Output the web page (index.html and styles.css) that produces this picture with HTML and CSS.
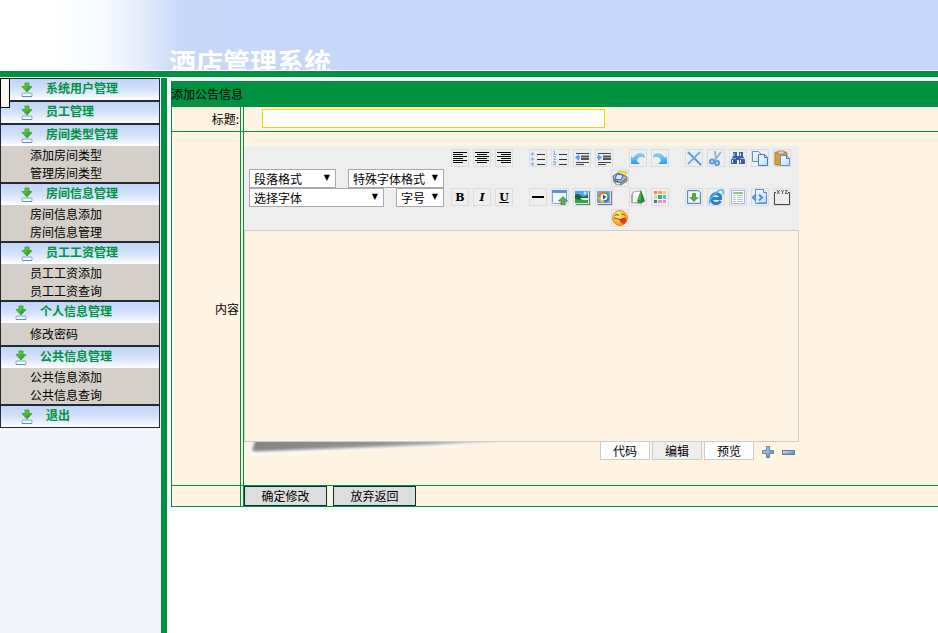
FILE: index.html
```html
<!DOCTYPE html>
<html lang="zh-CN">
<head>
<meta charset="utf-8">
<title>酒店管理系统</title>
<link rel="stylesheet" href="styles.css">
</head>
<body>
<svg class="defs" aria-hidden="true">
  <defs>
    <linearGradient id="gGreen" x1="0" y1="0" x2="1" y2="1"><stop offset="0" stop-color="#7be35c"/><stop offset="1" stop-color="#1c8414"/></linearGradient>
    <linearGradient id="gBlue" x1="0" y1="0" x2="1" y2="1"><stop offset="0" stop-color="#d4e8fc"/><stop offset="1" stop-color="#3f7fc8"/></linearGradient>
    <linearGradient id="gSheet" x1="0" y1="0" x2="1" y2="1"><stop offset="0" stop-color="#ffffff"/><stop offset="1" stop-color="#b9dafa"/></linearGradient>
    <linearGradient id="gArc" x1="0" y1="0" x2="0" y2="1"><stop offset="0" stop-color="#8fd3fa"/><stop offset="1" stop-color="#2f9df2"/></linearGradient>
    <radialGradient id="gFace" cx=".4" cy=".3" r=".8"><stop offset="0" stop-color="#fff27a"/><stop offset="1" stop-color="#f08a10"/></radialGradient>
    <symbol id="down" viewBox="0 0 12 15"><path d="M4 1h4v3.500h3L6 10 1 4.500h3z" fill="url(#gGreen)" stroke="#3fae35"/><rect x="1" y="11" width="10" height="3.500" rx="1" fill="#f4f8ff" stroke="#7fa3e2"/><path d="M1 14.500h10" stroke="#5f8ad6"/></symbol>
  </defs>
</svg>

<header class="banner"><h1>酒店管理系统</h1></header>

<div class="page">
  <nav class="side">
    <span class="handle"></span>
    <section><h2><svg><use href="#down"/></svg><a href="#">系统用户管理</a></h2></section>
    <section><h2><svg><use href="#down"/></svg><a href="#">员工管理</a></h2></section>
    <section><h2><svg><use href="#down"/></svg><a href="#">房间类型管理</a></h2>
      <ul><li><a href="#">添加房间类型</a></li><li><a href="#">管理房间类型</a></li></ul></section>
    <section><h2><svg><use href="#down"/></svg><a href="#">房间信息管理</a></h2>
      <ul><li><a href="#">房间信息添加</a></li><li><a href="#">房间信息管理</a></li></ul></section>
    <section><h2><svg><use href="#down"/></svg><a href="#">员工工资管理</a></h2>
      <ul><li><a href="#">员工工资添加</a></li><li><a href="#">员工工资查询</a></li></ul></section>
    <section class="near"><h2><svg><use href="#down"/></svg><a href="#">个人信息管理</a></h2>
      <ul class="single"><li><a href="#">修改密码</a></li></ul></section>
    <section class="near"><h2><svg><use href="#down"/></svg><a href="#">公共信息管理</a></h2>
      <ul><li><a href="#">公共信息添加</a></li><li><a href="#">公共信息查询</a></li></ul></section>
    <section><h2><svg><use href="#down"/></svg><a href="#">退出</a></h2></section>
  </nav>

  <main>
    <form class="sheet">
      <h2 class="caption">添加公告信息</h2>
      <div class="row">
        <label class="name" for="title">标题:</label>
        <div class="field title-field"><input id="title" type="text"></div>
      </div>
      <div class="row">
        <label class="name" for="content">内容</label>
        <div class="field content-field">
          <div class="editor">
            <div class="toolbar">
              <div class="picks r2">
                <span class="pick wide-s"><select aria-label="段落格式"><option>段落格式</option></select></span>
                <span class="pick wide-m"><select aria-label="特殊字体格式"><option>特殊字体格式</option></select></span>
              </div>
              <div class="picks r3">
                <span class="pick wide-l"><select aria-label="选择字体"><option>选择字体</option></select></span>
                <span class="pick wide-xs"><select aria-label="字号"><option>字号</option></select></span>
              </div>

              <div class="tools c2 r1">
                <button type="button" aria-label="左对齐"><svg viewBox="0 0 16 16"><path d="M1 2.500h14M1 4.500h10M1 6.500h14M1 8.500h10M1 10.500h14M1 12.500h10" stroke="#000"/></svg></button>
                <button type="button" aria-label="居中"><svg viewBox="0 0 16 16"><path d="M1 2.500h14M3 4.500h10M1 6.500h14M3 8.500h10M1 10.500h14M3 12.500h10" stroke="#000"/></svg></button>
                <button type="button" aria-label="右对齐"><svg viewBox="0 0 16 16"><path d="M1 2.500h14M5 4.500h10M1 6.500h14M5 8.500h10M1 10.500h14M5 12.500h10" stroke="#000"/></svg></button>
              </div>
              <div class="tools c2 r3">
                <button type="button" class="letter">B</button>
                <button type="button" class="letter slant">I</button>
                <button type="button" class="letter under">U</button>
              </div>

              <div class="tools c3 r1">
                <button type="button" aria-label="项目符号"><svg viewBox="0 0 16 16"><path d="M7 4.500h8M7 9.500h8M7 14.500h8" stroke="#333"/><path d="M2.500 2l2 2-2 2-2-2zM2.500 7l2 2-2 2-2-2zM2.500 12l2 2-2 2-2-2z" fill="#8ab8f2"/></svg></button>
                <button type="button" aria-label="编号"><svg viewBox="0 0 16 16"><path d="M7 4.500h8M7 9.500h8M7 14.500h8" stroke="#333"/><path d="M1 1.500h1.500v3M1 4.500h3M1 6.500h2.500v1.500L1.500 9.500h3M1 11.500h2.500v3H1M1.500 13h2" fill="none" stroke="#8ab8f2"/></svg></button>
                <button type="button" aria-label="减少缩进"><svg viewBox="0 0 16 16"><path d="M2 3.500h13M2 12.500h13M2 14.500h8" stroke="#444"/><path d="M7 6.500h8M7 9h8" stroke="#555" stroke-width="2"/><path d="M6 6.500H5V4L1 7.500 5 11V8.500h1z" fill="#5d9cec"/></svg></button>
                <button type="button" aria-label="增加缩进"><svg viewBox="0 0 16 16"><path d="M2 3.500h13M2 12.500h13M2 14.500h8" stroke="#444"/><path d="M7 6.500h8M7 9h8" stroke="#555" stroke-width="2"/><path d="M1 6.500h1V4l4 3.500L2 11V8.500H1z" fill="#5d9cec"/></svg></button>
              </div>
              <div class="tools c3 r2 end">
                <button type="button" aria-label="打印"><svg viewBox="0 0 16 16"><path d="M7 1l8 1-2 4-8-1z" fill="#ffe93a" stroke="#b3a03a" stroke-width=".6"/><path d="M1 6l5-3 5 2 4 2v4l-6 4-7-3z" fill="#a9b6c2" stroke="#4a5964" stroke-width=".8"/><path d="M5 4l6 1-2 5-6-1z" fill="#dceaff" stroke="#3b66b8"/><path d="M2 10l7 3 5-4" fill="none" stroke="#37505f"/><path d="M4 12l5 1-2 2-4-1z" fill="#fff" stroke="#596c78" stroke-width=".6"/></svg></button>
              </div>
              <div class="tools c3 r3">
                <button type="button" aria-label="水平线"><svg viewBox="0 0 16 16"><path d="M2 8h12" stroke="#000" stroke-width="2"/></svg></button>
                <button type="button" aria-label="插入窗口"><svg viewBox="0 0 16 16"><rect x=".5" y="1.500" width="14" height="13" rx="1" fill="#f2f8ff" stroke="#7da5da"/><path d="M0 1h15v3H0z" fill="#5a92dc"/><path d="M11 7.500l4.500 4.500H13v4H9v-4H6.500z" fill="#63ad5b" stroke="#347d38" stroke-width=".7"/></svg></button>
                <button type="button" aria-label="图片"><svg viewBox="0 0 16 16"><path d="M2 2h14v14H2z" fill="#777"/><path d="M1 1h14v14H1z" fill="#d8e2ea"/><path d="M1 2h13v12H1z" fill="#4fa4ee"/><path d="M1 6c4-3 6 2 9 2l4-2v5H1z" fill="#116838"/><path d="M6 9h8v2H8z" fill="#e5efbb"/><path d="M1 10l6 1 7 0v3H1z" fill="#34a846"/><circle cx="11" cy="4" r="1.500" fill="#cfeaff"/></svg></button>
                <button type="button" aria-label="媒体"><svg viewBox="0 0 16 16"><path d="M2 2h14v14H2z" fill="#777"/><path d="M1 1h14v14H1z" fill="#dfe8f2"/><path d="M1 2h13v12H1z" fill="#6fa4e4"/><circle cx="8" cy="8" r="5.500" fill="#f8b83a"/><path d="M2.500 8A5.500 5.500 0 0 1 8 2.500V8z" fill="#ee6c26"/><path d="M8 2.500A5.500 5.500 0 0 1 13.500 8H8z" fill="#51a64b"/><path d="M13.500 8A5.500 5.500 0 0 1 8 13.500V8z" fill="#3d73cb"/><circle cx="8" cy="8" r="3.300" fill="#fff"/><path d="M7 5.500L10.500 8 7 10.500z" fill="#1855b4"/></svg></button>
              </div>
              <div class="tools c3 r4 end">
                <button type="button" aria-label="表情"><svg viewBox="0 0 16 16"><circle cx="8" cy="8" r="7.500" fill="url(#gFace)" stroke="#d9860e" stroke-width=".8"/><path d="M3 5.500q2-2 4 0M9.500 4.500q2-1 3.500 1" fill="none" stroke="#7b4105"/><path d="M2 8q6 3 12 0" fill="none" stroke="#9b4a13"/><path d="M8 10l5-1.500q2 4-1.500 5-3-.5-3.500-3.500z" fill="#ef3724" stroke="#a8200f" stroke-width=".5"/></svg></button>
              </div>

              <div class="tools c4 r1">
                <button type="button" aria-label="撤销"><svg viewBox="0 0 16 16"><path d="M1 6l2 2Q6 3 10 3q5 0 5 5-2-2-5-1-3 1-3 4l3 3H1z" fill="url(#gArc)"/></svg></button>
                <button type="button" aria-label="重做"><svg viewBox="0 0 16 16"><path d="M15 6l-2 2Q10 3 6 3 1 3 1 8q2-2 5-1 3 1 3 4l-3 3h9z" fill="url(#gArc)"/></svg></button>
              </div>
              <div class="tools c4 r3">
                <button type="button" aria-label="背景颜色"><svg viewBox="0 0 16 16"><path d="M3 3l8-1-2 11-7 1z" fill="#fdfdfd" stroke="#999" stroke-width=".8"/><path d="M3 3L1 6v8h2z" fill="#aaa"/><path d="M4 14l5-1 6-1-4 3z" fill="#888"/><path d="M11 1l4 11q-4 3-8 0z" fill="#1f8a2b"/><path d="M11 1v11l-3-1z" fill="#55b04b"/></svg></button>
                <button type="button" aria-label="颜色"><svg viewBox="0 0 16 16"><path d="M2 2h3v3H2z" fill="#f27a68"/><path d="M6 2h4v3H6z" fill="#ff9d62"/><path d="M11 2h3v3h-3z" fill="#ffcf4f"/><path d="M2 6h3v4H2z" fill="#c9e7a5"/><path d="M6 6h4v4H6z" fill="#3fb84d"/><path d="M11 6h3v4h-3z" fill="#52b8ee"/><path d="M2 11h3v3H2z" fill="#466fae"/><path d="M6 11h4v3H6z" fill="#c79ade"/><path d="M11 11h3v3h-3z" fill="#f58cc0"/></svg></button>
              </div>

              <div class="tools c5 r1">
                <button type="button" aria-label="删除"><svg viewBox="0 0 16 16"><path d="M2 2l13 13" stroke="#4e9be0" stroke-width="2"/><path d="M14 2L2 14" stroke="#6cb2ec" stroke-width="2"/></svg></button>
                <button type="button" aria-label="剪切"><svg viewBox="0 0 16 16"><path d="M7 1l1 9M13 2L7 10" stroke="#9db4c8" stroke-width="2"/><circle cx="4" cy="11.500" r="2" fill="none" stroke="#5b9bd8" stroke-width="2"/><circle cx="9" cy="13" r="2" fill="none" stroke="#5b9bd8" stroke-width="2"/></svg></button>
                <button type="button" aria-label="查找"><svg viewBox="0 0 16 16"><path d="M3 2h4v4h2V2h4v4l2 4v4H9v-4H7v4H1v-4l2-4z" fill="#3f5da5"/><path d="M4 3v3M10.500 3v3M2.500 10v3M10.500 10v3" stroke="#dceaff"/><path d="M2 8.500h4M10 8.500h4" stroke="#8fb0e4"/></svg></button>
                <button type="button" aria-label="复制"><svg viewBox="0 0 16 16"><path d="M.5 1.500h6l3 3v7h-9z" fill="url(#gSheet)" stroke="#5b8fdc"/><path d="M6.500 4.500h6l3 3v8h-9z" fill="url(#gSheet)" stroke="#457dce"/><path d="M12.500 4.500v3h3" fill="none" stroke="#457dce"/></svg></button>
                <button type="button" aria-label="粘贴"><svg viewBox="0 0 16 16"><rect x="1" y="2" width="12" height="13" rx="1" fill="#d59a50" stroke="#b57b30"/><path d="M4 1h6v3H4z" fill="#ebd9b0" stroke="#9a8257" stroke-width=".8"/><path d="M6.500 5.500h6l3 3v7h-9z" fill="url(#gSheet)" stroke="#5b8fdc"/><path d="M12.500 5.500v3h3" fill="none" stroke="#457dce"/></svg></button>
              </div>
              <div class="tools c5 r3">
                <button type="button" aria-label="下载"><svg viewBox="0 0 16 16"><path d="M1.500 1.500h11l2 2v11h-13z" fill="#cfe4fb" stroke="#5b87bd"/><path d="M3 3h10v10H3z" fill="#f2f9ff"/><path d="M6 4h4v4h3l-5 5-5-5h3z" fill="#5aa548"/></svg></button>
                <button type="button" aria-label="链接"><svg viewBox="0 0 16 16"><path d="M14 9.500H4.500M12.500 12A5 5 0 1 1 13 8.500" fill="none" stroke="#2581d2" stroke-width="3"/><path d="M2 15C-1 12 10-1 15 1.500q1 1-.5 4" fill="none" stroke="#56b3ec" stroke-width="1.500"/></svg></button>
                <button type="button" aria-label="表格"><svg viewBox="0 0 16 16"><rect x="1.500" y="1.500" width="13" height="13" fill="#fff" stroke="#9abbe6"/><path d="M3 4h10" stroke="#93c77a" stroke-width="2"/><path d="M3 6.500h3M7 6.500h6M3 8.500h3M7 8.500h6M3 10.500h3M7 10.500h6M3 12.500h3M7 12.500h6" stroke="#a9c8ec"/></svg></button>
                <button type="button" aria-label="插入代码"><svg viewBox="0 0 16 16"><path d="M3.500.500h8l3 3v11h-11z" fill="url(#gSheet)" stroke="#5b8fdc"/><path d="M11.500.500v3h3" fill="#fff" stroke="#4d86cf"/><path d="M4 5.500L1 8.500l3 3M7 5.500l3 3-3 3" fill="none" stroke="#4b91e0" stroke-width="2"/><path d="M6 13.500h8" stroke="#75a7e3"/></svg></button>
                <button type="button" aria-label="字段集"><svg viewBox="0 0 16 16"><path d="M2 3.500H.500v12h15v-12H14" fill="none" stroke="#444"/><path d="M3 1l2.500 4M5.500 1L3 5M7 1l1.500 2L10 1M8.500 3v2M11 1.500h2.500L11 4.500h3" fill="none" stroke="#555" stroke-width=".9"/></svg></button>
              </div>
            </div>
            <textarea id="content"></textarea>
            <div class="foot">
              <svg class="shade" viewBox="0 0 250 16" aria-hidden="true">
                <defs><linearGradient id="gShade" x1="0" x2="1"><stop offset="0" stop-color="#858585"/><stop offset=".5" stop-color="#929292"/><stop offset="1" stop-color="#c4c4c4"/></linearGradient><filter id="soft" x="-5%" y="-60%" width="110%" height="220%"><feGaussianBlur stdDeviation="1.500"/></filter></defs>
                <path d="M4-4L0 10q1 3 5 3L200 4 250 0V-4z" fill="#fff" filter="url(#soft)"/>
                <path d="M7-5L3 8q1 2 5 1.500L180 3 250-1V-5z" fill="url(#gShade)" filter="url(#soft)"/>
              </svg>
              <div class="modes">
                <button type="button">代码</button><button type="button" class="on">编辑</button><button type="button">预览</button>
              </div>
              <button type="button" class="size" aria-label="增高"><svg viewBox="0 0 14 14"><path d="M5.500 1.500h3v4h4v3h-4v4h-3v-4h-4v-3h4z" fill="url(#gBlue)" stroke="#6a7f95"/></svg></button>
              <button type="button" class="size" aria-label="减低"><svg viewBox="0 0 14 14"><rect x="1.500" y="5.500" width="12" height="4" fill="url(#gBlue)" stroke="#6a7f95"/></svg></button>
            </div>
          </div>
        </div>
      </div>
      <div class="row">
        <span class="name"></span>
        <div class="field actions">
          <button type="submit">确定修改</button><button type="reset">放弃返回</button>
        </div>
      </div>
    </form>
  </main>
</div>
</body>
</html>
```
FILE: styles.css
```css
* { box-sizing: border-box; }
body {
  margin: 0;
  min-height: 100vh;
  display: flex;
  flex-direction: column;
  background: #fff;
  color: #000;
  font: 12px/18px "Noto Sans CJK SC", "Liberation Sans", sans-serif;
}
button, input, select, textarea { font: inherit; color: inherit; margin: 0; border-radius: 0; }
h1, h2, ul { margin: 0; padding: 0; }
a { color: inherit; text-decoration: none; }
.defs { position: absolute; width: 0; height: 0; }

.banner {
  height: 70px;
  overflow: hidden;
  padding: 44px 0 0 169px;
  background: linear-gradient(90deg, #fff 50px, #f8faff 100px, #e5edfb 140px, #c7d9f7 180px, #c5d8f8 300px);
}
.banner h1 { color: #fff; font-size: 27px; line-height: 36px; }

.page {
  flex: 1;
  display: flex;
  margin-top: 1px;
  border-top: 6px solid #009240;
  padding-top: 1px;
}
.side {
  position: relative;
  flex: none;
  width: 167px;
  padding-right: 1px;
  border-right: 6px solid #009240;
  background: #f2f6fb;
}
.side section { border: 1px solid #25282e; }
.side h2 {
  display: flex;
  align-items: center;
  gap: 13px;
  height: 21px;
  padding-left: 20px;
  background: linear-gradient(#c0d5f7, #d3e1fa 50%, #fff);
  color: #009240;
  font-size: 12px;
  line-height: 18px;
}
.side h2 svg { width: 12px; height: 15px; }
.side h2 a { padding-bottom: 4px; }
.side .near h2 { padding-left: 14px; }
.side ul { list-style: none; padding-left: 29px; background: #d4cfc8; }
.side .single { padding-top: 2px; padding-bottom: 2px; }
.handle {
  position: absolute;
  top: 0;
  left: 0;
  width: 10px;
  height: 30px;
  border: 1px solid #000;
  background: #f8f8f3;
}

main { flex: 1; min-width: 0; padding: 3px 0 0 4px; }
.sheet { border-left: 1px solid #009240; }
.caption {
  height: 26px;
  margin-left: -1px;
  background: #009240;
  font-size: 12px;
  font-weight: normal;
  line-height: 26px;
}
.row {
  display: flex;
  border-bottom: 1px solid #009240;
  background: #fff3e1;
}
.name {
  flex: none;
  display: flex;
  align-items: center;
  justify-content: flex-end;
  width: 70px;
  padding-right: 2px;
  border-right: 1px solid #009240;
}
.field { flex: 1; min-width: 0; margin-left: 2px; border-left: 1px solid #009240; }
.row .name { width: 69px; padding-right: 1px; }
.title-field { padding: 2px 0 3px 18px; }
.title-field input {
  display: block;
  width: 343px;
  height: 19px;
  padding: 0 2px;
  border: 1px solid #fc0;
  background: #fff;
  outline: 0;
}

.content-field { padding: 14px 0 24px; }
.editor { width: 555px; }
.toolbar {
  display: grid;
  grid-template-columns: 202px 78px 100px 56px 106px;
  grid-template-rows: 20px 19px 21px 21px;
  padding: 3px 0 0 5px;
  background: #eee;
}
.r1 { grid-row: 1; }
.r2 { grid-row: 2; }
.r3 { grid-row: 3; }
.r4 { grid-row: 4; }
.c2 { grid-column: 2; }
.c3 { grid-column: 3; }
.c4 { grid-column: 4; }
.c5 { grid-column: 5; }
.picks { grid-column: 1; display: flex; gap: 12px; height: 19px; }
.pick { position: relative; height: 19px; }
.pick select {
  display: block;
  width: 100%;
  height: 19px;
  padding: 0 4px;
  appearance: none;
  border: 1px solid #a9a9a9;
  background: #fff;
  line-height: 17px;
}
.pick::after {
  content: "▼";
  position: absolute;
  top: 0;
  right: 6px;
  font: 8px/17px "DejaVu Sans", sans-serif;
  pointer-events: none;
}
.wide-xs { width: 48px; }
.wide-s { width: 87px; }
.wide-m { width: 96px; }
.wide-l { width: 135px; }
.tools { display: flex; gap: 4px; height: 18px; }
.end { justify-content: flex-end; }
.tools button {
  flex: none;
  width: 18px;
  height: 18px;
  padding: 0;
  border: 1px solid #ddd;
  background: none;
}
.tools svg { display: block; width: 16px; height: 16px; }
.tools .letter { font: bold 11px/15px "DejaVu Serif", serif; }
.tools .slant { font-style: italic; }
.tools .under { text-decoration: underline; }
textarea {
  display: block;
  width: 100%;
  height: 212px;
  border: 1px solid #ccc;
  background: #fff3e1;
  resize: none;
  outline: 0;
}
.foot { display: flex; padding-left: 5px; height: 19px; }
.shade { width: 250px; height: 16px; }
.modes { display: flex; gap: 2px; margin: 0 7px 0 101px; }
.modes button {
  width: 50px;
  height: 18px;
  padding: 0;
  border: 1px solid #ccc;
  border-top: 0;
  background: #fff;
  line-height: 16px;
}
.modes { flex: none; }
.modes .on { background: #eee; }
.size { flex: none; width: 20px; height: 18px; padding: 2px 0 0; border: 0; background: none; }
.size svg { display: block; width: 14px; height: 14px; }
.shade { flex: none; }

.actions { display: flex; gap: 6px; }
.actions button {
  width: 83px;
  height: 20px;
  padding: 0;
  border: 1px solid #033;
  background: #ddd;
  line-height: 16px;
}
```
